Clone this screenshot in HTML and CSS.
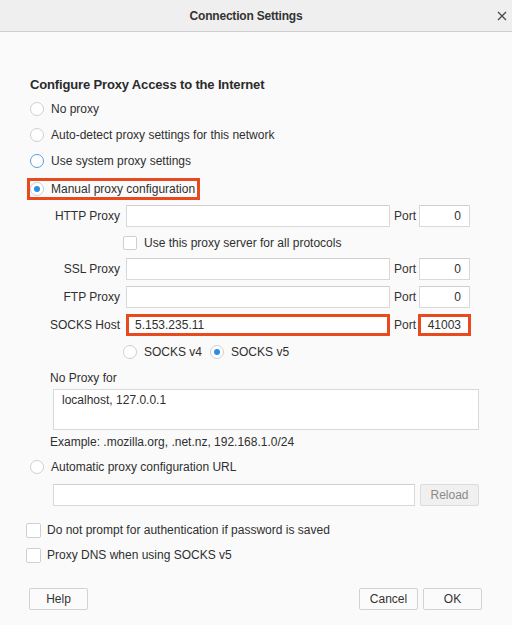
FILE: index.html
```html
<!DOCTYPE html>
<html>
<head>
<meta charset="utf-8">
<link rel="stylesheet" href="styles.css">
</head>
<body>
<div class="dialog">
  <div class="titlebar">
    <span></span>
    <span class="title">Connection Settings</span>
    <span class="close"><svg width="10" height="10" viewBox="0 0 10 10"><path d="M1 1L9 9M9 1L1 9" stroke="#4a4a4a" stroke-width="1.3" fill="none"/></svg></span>
  </div>
  <div class="content">
    <h1 class="heading">Configure Proxy Access to the Internet</h1>
    <div class="radios">
      <div class="row"><span class="radio"></span><span>No proxy</span></div>
      <div class="row"><span class="radio"></span><span>Auto-detect proxy settings for this network</span></div>
      <div class="row"><span class="radio focus"></span><span>Use system proxy settings</span></div>
      <div class="row"><span class="mark"><span class="radio checked"></span><span>Manual proxy configuration</span></span></div>
    </div>
    <div class="proxygrid">
      <span class="lbl">HTTP Proxy</span><span class="field wide"></span><span class="port">Port</span><span class="field num">0</span>
      <div class="checkrow"><span class="check"></span><span>Use this proxy server for all protocols</span></div>
      <span class="lbl">SSL Proxy</span><span class="field wide"></span><span class="port">Port</span><span class="field num">0</span>
      <span class="lbl">FTP Proxy</span><span class="field wide"></span><span class="port">Port</span><span class="field num">0</span>
      <span class="lbl">SOCKS Host</span><span class="field wide hl">5.153.235.11</span><span class="port">Port</span><span class="field num hl">41003</span>
      <div class="socksrow"><span class="radio"></span><span class="v4">SOCKS v4</span><span class="radio checked"></span><span>SOCKS v5</span></div>
    </div>
    <div class="noproxy">No Proxy for</div>
    <div class="textarea">localhost, 127.0.0.1</div>
    <div class="example">Example: .mozilla.org, .net.nz, 192.168.1.0/24</div>
    <div class="row autorow"><span class="radio"></span><span>Automatic proxy configuration URL</span></div>
    <div class="urlrow"><span class="field url"></span><span class="btn disabled">Reload</span></div>
    <div class="crow first"><span class="check"></span><span>Do not prompt for authentication if password is saved</span></div>
    <div class="crow"><span class="check"></span><span>Proxy DNS when using SOCKS v5</span></div>
    <div class="buttons">
      <span class="btn">Help</span>
      <span class="spacer"></span>
      <span class="btn">Cancel</span>
      <span class="btn">OK</span>
    </div>
  </div>
</div>
</body>
</html>
```
FILE: styles.css
```css
* { box-sizing: border-box; }
html, body { margin: 0; padding: 0; }
body {
  width: 512px;
  height: 625px;
  background: #fafafa;
  font-family: "Liberation Sans", Arial, sans-serif;
  font-size: 12px;
  color: #2f2f2f;
  overflow: hidden;
}
.titlebar {
  height: 32px;
  background: #efefef;
  border-bottom: 1px solid #cfcfcf;
  display: grid;
  grid-template-columns: 1fr auto 1fr;
  align-items: center;
}
.title {
  font-weight: bold;
  font-size: 12px;
  letter-spacing: -0.2px;
  color: #333;
  margin-right: 20px;
}
.close {
  justify-self: end;
  padding-right: 5px;
  display: flex;
}
.heading {
  margin: 45px 0 0 30px;
  font-size: 13px;
  line-height: 16px;
  font-weight: bold;
  letter-spacing: -0.15px;
  color: #2b2b2b;
}
.radios { margin-top: 3px; }
.row {
  height: 26px;
  display: flex;
  align-items: center;
  padding-left: 30px;
  gap: 7px;
}
.radio {
  width: 14px;
  height: 14px;
  border-radius: 50%;
  border: 1px solid #cfcfcf;
  background: #fff;
  flex: none;
  position: relative;
}
.radio.focus {
  border: 1.5px solid #5a9ce0;
}
.radio.checked::after {
  content: "";
  position: absolute;
  left: 3px;
  top: 3px;
  width: 6px;
  height: 6px;
  border-radius: 50%;
  background: #2a8fe4;
}
.mark {
  display: flex;
  align-items: center;
  gap: 7px;
  border: 3px solid #e9491e;
  margin-left: -3px;
  height: 22px;
  padding-right: 2px;
  margin-top: 3px;
}
.proxygrid {
  margin-top: 5px;
  display: grid;
  grid-template-columns: 123px 267px 29px 51px;
  grid-template-rows: 22px 19px 22px 22px 22px 20px;
  row-gap: 6px;
  align-items: center;
}
.lbl { text-align: right; padding-right: 3px; grid-column: 1; }
.field {
  height: 22px;
  background: #fff;
  border: 1px solid #d9d9d9;
  border-top-color: #cfcfcf;
  display: flex;
  align-items: center;
  padding: 0 6px;
}
.field.wide { margin-left: 3px; }
.port { padding-left: 4px; color: #333; }
.field.num { justify-content: flex-end; padding-right: 8px; }
.field.hl {
  border: 3px solid #e9491e;
  padding-left: 6px;
}
.field.num.hl { padding-right: 7px; margin-left: -1px; margin-right: -1px; }
.checkrow {
  grid-column: 2 / -1;
  display: flex;
  align-items: center;
  gap: 7px;
}
.check {
  width: 14px;
  height: 14px;
  border: 1px solid #d0d0d0;
  border-radius: 2px;
  background: #fff;
  flex: none;
}
.socksrow {
  grid-column: 2 / -1;
  height: 20px;
  display: flex;
  align-items: center;
  gap: 7px;
}
.v4 { margin-right: 1px; }
.noproxy {
  margin: 8px 0 0 50px;
  line-height: 16px;
}
.textarea {
  margin: 3px 0 0 53px;
  width: 426px;
  height: 41px;
  background: #fff;
  border: 1px solid #d9d9d9;
  padding: 3px 8px;
  line-height: 14px;
}
.example {
  margin: 4px 0 0 50px;
  line-height: 16px;
}
.autorow { margin-top: 4px; }
.urlrow {
  margin: 4px 0 0 53px;
  display: flex;
  gap: 5px;
}
.field.url { width: 362px; }
.btn {
  height: 22px;
  width: 59px;
  border: 1px solid #d2d2d2;
  border-radius: 2px;
  background: #fbfbfb;
  display: flex;
  align-items: center;
  justify-content: center;
  color: #333;
}
.btn.disabled {
  background: #f0f0f0;
  color: #8a8a8a;
  border-color: #dcdcdc;
}
.crow {
  height: 20px;
  display: flex;
  align-items: center;
  gap: 6px;
  padding-left: 26px;
  margin-top: 5px;
}
.crow .check { width: 15px; height: 15px; }
.crow.first { margin-top: 14px; }
.buttons {
  margin: 23px 0 0 29px;
  width: 453px;
  display: flex;
  gap: 5px;
}
.spacer { flex: 1; }
```
